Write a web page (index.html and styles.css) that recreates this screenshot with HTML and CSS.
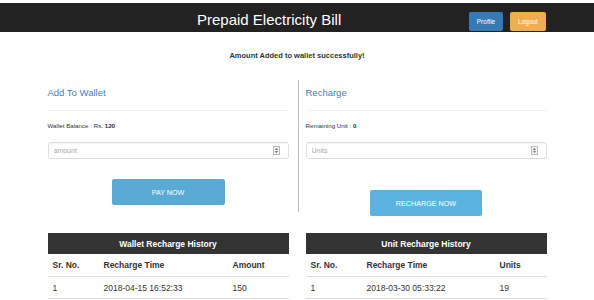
FILE: index.html
```html
<!DOCTYPE html>
<html lang="en">
<head>
    <meta charset="UTF-8">
    <meta name="viewport" content="width=device-width, initial-scale=1.0">
    <title>Prepaid Electricity Bill</title>
    <link rel="stylesheet" href="styles.css">
</head>
<body>
    <div class="navbar">
        <span class="brand">Prepaid Electricity Bill</span>
        <div class="nav-buttons">
            <button type="button" class="btn-profile">Profile</button>
            <button type="button" class="btn-logout">Logout</button>
        </div>
    </div>

    <p class="message">Amount Added to wallet successfully!</p>

    <div class="panels">
        <div class="panel panel-left">
            <h3>Add To Wallet</h3>
            <hr>
            <p class="info">Wallet Balance : Rs. <strong>120</strong></p>
            <div class="field">
                <input type="text" placeholder="amount">
                <span class="spin">
                    <svg width="7" height="9" viewBox="0 0 7 9">
                        <rect x="0.5" y="0.5" width="6" height="8" fill="#f4f4f4" stroke="#bbb"/>
                        <path d="M2 4 L3.5 2 L5 4 Z M2 5 L3.5 7 L5 5 Z" fill="#666"/>
                    </svg>
                </span>
            </div>
            <button type="button" class="btn-action">PAY NOW</button>
        </div>
        <div class="panel panel-right">
            <h3>Recharge</h3>
            <hr>
            <p class="info">Remaining Unit : <strong>0</strong></p>
            <div class="field">
                <input type="text" placeholder="Units">
                <span class="spin">
                    <svg width="7" height="9" viewBox="0 0 7 9">
                        <rect x="0.5" y="0.5" width="6" height="8" fill="#f4f4f4" stroke="#bbb"/>
                        <path d="M2 4 L3.5 2 L5 4 Z M2 5 L3.5 7 L5 5 Z" fill="#666"/>
                    </svg>
                </span>
            </div>
            <button type="button" class="btn-action btn-recharge">RECHARGE NOW</button>
        </div>
    </div>

    <div class="history">
        <table class="wallet-table">
            <colgroup>
                <col class="c1"><col class="c2"><col class="c3">
            </colgroup>
            <thead>
                <tr><th colspan="3" class="caption">Wallet Recharge History</th></tr>
                <tr class="head-row">
                    <th>Sr. No.</th>
                    <th>Recharge Time</th>
                    <th>Amount</th>
                </tr>
            </thead>
            <tbody>
                <tr><td>1</td><td>2018-04-15 16:52:33</td><td>150</td></tr>
            </tbody>
        </table>
        <table class="unit-table">
            <colgroup>
                <col class="c1"><col class="c2"><col class="c3">
            </colgroup>
            <thead>
                <tr><th colspan="3" class="caption">Unit Recharge History</th></tr>
                <tr class="head-row">
                    <th>Sr. No.</th>
                    <th>Recharge Time</th>
                    <th>Units</th>
                </tr>
            </thead>
            <tbody>
                <tr><td>1</td><td>2018-03-30 05:33:22</td><td>19</td></tr>
            </tbody>
        </table>
    </div>
</body>
</html>
```

FILE: styles.css
```css
body {
    margin: 0;
    font-family: "Liberation Sans", Arial, sans-serif;
    color: #333;
    background: #fff;
}
.navbar {
    margin-top: 3px;
    height: 29px;
    background-color: #222;
    display: flex;
    padding-right: 48px;
}
.brand {
    margin-left: 197px;
    padding-top: 4px;
    line-height: 25px;
    font-size: 15px;
    color: #fff;
}
.nav-buttons {
    margin-left: auto;
    align-self: flex-end;
    margin-bottom: 1px;
    display: flex;
    gap: 7px;
}
.nav-buttons button {
    height: 19px;
    border: none;
    border-radius: 2px;
    color: #fff;
    font-family: inherit;
    font-size: 6.5px;
    padding: 0;
}
.btn-profile {
    width: 34px;
    background-color: #337ab7;
}
.btn-logout {
    width: 36px;
    background-color: #f0ad4e;
}
.message {
    margin: 19px 0 0;
    line-height: 10px;
    text-align: center;
    font-size: 7.5px;
    font-weight: bold;
}
.panels {
    width: 499px;
    margin: 19px auto 0;
    display: grid;
    grid-template-columns: 251px 241px;
    column-gap: 7px;
    align-items: start;
}
.panel-left {
    border-right: 1px solid #bbb;
    padding-right: 9px;
    padding-bottom: 7px;
}
.panel h3 {
    margin: 6px 0 10px;
    line-height: 14px;
    font-size: 9.5px;
    font-weight: normal;
    color: #3f80c2;
}
.panel hr {
    margin: 0;
    border: none;
    border-top: 1px solid #f0f0f0;
}
.info {
    margin: 10px 0 0;
    line-height: 10px;
    font-size: 6.2px;
}
.field {
    margin-top: 11px;
    height: 17px;
    box-sizing: border-box;
    border: 1px solid #ddd;
    border-radius: 3px;
    display: flex;
    align-items: center;
    padding: 0 8px 0 5px;
    box-shadow: inset 0 1px 1px rgba(0,0,0,0.04);
}
.field input {
    flex: 1;
    border: none;
    outline: none;
    padding: 0;
    font-family: inherit;
    font-size: 7px;
    color: #555;
    background: transparent;
}
.field input::placeholder {
    color: #aaa;
}
.spin {
    display: flex;
}
.btn-action {
    display: block;
    margin: 20px auto 0;
    width: 113px;
    height: 26px;
    border: none;
    border-radius: 2px;
    background-color: #5aaad6;
    color: #fff;
    font-family: inherit;
    font-size: 7.2px;
    padding: 0;
}
.btn-recharge {
    margin-top: 31px;
    width: 112px;
    background-color: #5bb3e0;
}
.history {
    width: 499px;
    margin: 17px auto 0;
    display: grid;
    grid-template-columns: 241px 241px;
    column-gap: 17px;
}
table {
    width: 100%;
    border-collapse: collapse;
    font-size: 8.5px;
    table-layout: fixed;
}
th, td {
    text-align: left;
    padding: 0 5px;
    white-space: nowrap;
}
.caption {
    height: 21px;
    background-color: #333;
    color: #fff;
    text-align: center;
}
.head-row th {
    height: 22px;
    border-bottom: 1px solid #ddd;
}
td {
    height: 21px;
    border-bottom: 1px solid #ddd;
}
.wallet-table .c1 { width: 51px; }
.wallet-table .c2 { width: 129px; }
.wallet-table .c3 { width: 61px; }
.unit-table .c1 { width: 56px; }
.unit-table .c2 { width: 133px; }
.unit-table .c3 { width: 52px; }
```
